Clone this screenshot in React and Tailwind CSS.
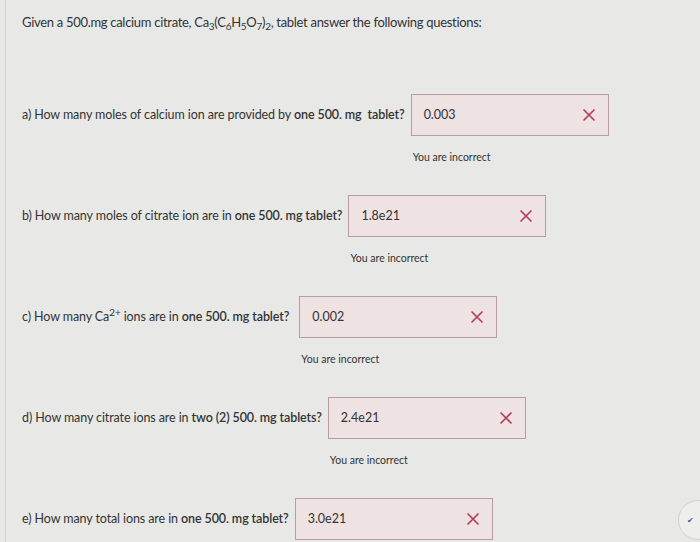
const rows = [
  { label: <>a) How many moles of calcium ion are provided by <b className="font-semibold">one 500. mg&nbsp; tablet?</b></>, value: "0.003" },
  { label: <>b) How many moles of citrate ion are in <b className="font-semibold">one 500. mg tablet?</b></>, value: "1.8e21" },
  { label: <>c) How many Ca<sup className="text-[10px]">2+</sup> ions are in <b className="font-semibold">one 500. mg tablet?</b></>, value: "0.002", gap: true },
  { label: <>d) How many citrate ions are in <b className="font-semibold">two (2) 500. mg tablets?</b></>, value: "2.4e21" },
  { label: <>e) How many total ions are in <b className="font-semibold">one 500. mg tablet?</b></>, value: "3.0e21", last: true },
];

const XIcon = () => (
  <svg width="14" height="14" viewBox="0 0 14 14" className="text-[#b3405b]">
    <path d="M2 2 L12 12 M12 2 L2 12" stroke="currentColor" strokeWidth="1.7" strokeLinecap="round" />
  </svg>
);

const Row = ({ label, value, last, gap }) => (
  <div className="flex items-start h-[101px]">
    <div className="h-[42px] flex items-center text-[12.5px] tracking-[-0.1px] text-[#333] whitespace-nowrap">
      <span>{label}</span>
    </div>
    <div className={gap ? "ml-[10px] flex flex-col" : "ml-[6px] flex flex-col"}>
      <div className="w-[198px] h-[42px] border border-[#b89ca0] bg-[#eee2e2] flex items-center justify-between pl-[12px] pr-[12px]">
        <span className="text-[12.5px] text-[#333]">{value}</span>
        <XIcon />
      </div>
      {!last && <div className="mt-[14px] ml-[2px] text-[10.5px] text-[#333]">You are incorrect</div>}
    </div>
  </div>
);

export default function App() {
  return (
    <div className="relative w-[700px] h-[542px] overflow-hidden bg-[#e8e9e7]" style={{ fontFamily: "Lato, 'Noto Sans', sans-serif" }}>
      <div className="absolute left-[5px] top-0 bottom-0 w-[1px] bg-[#d2d3d1]" />
      <div className="pl-[22px] pt-[13px]">
        <h1 className="text-[13px] leading-[18px] tracking-[-0.3px] text-[#333] whitespace-nowrap">
          Given a 500.mg calcium citrate, Ca<sub className="text-[10px]">3</sub>(C<sub className="text-[10px]">6</sub>H<sub className="text-[10px]">5</sub>O<sub className="text-[10px]">7</sub>)<sub className="text-[10px]">2</sub>, tablet answer the following questions:
        </h1>
        <div className="mt-[63px]">
          {rows.map((r, i) => (
            <Row key={i} {...r} />
          ))}
        </div>
      </div>
      <div className="absolute left-[678px] top-[500px] w-[40px] h-[40px] rounded-full border border-[#cfd0ce] bg-[#eeefed] flex items-center pl-[8px]">
        <span className="text-[8px] text-[#4a5bb0]">✔</span>
      </div>
    </div>
  );
}
